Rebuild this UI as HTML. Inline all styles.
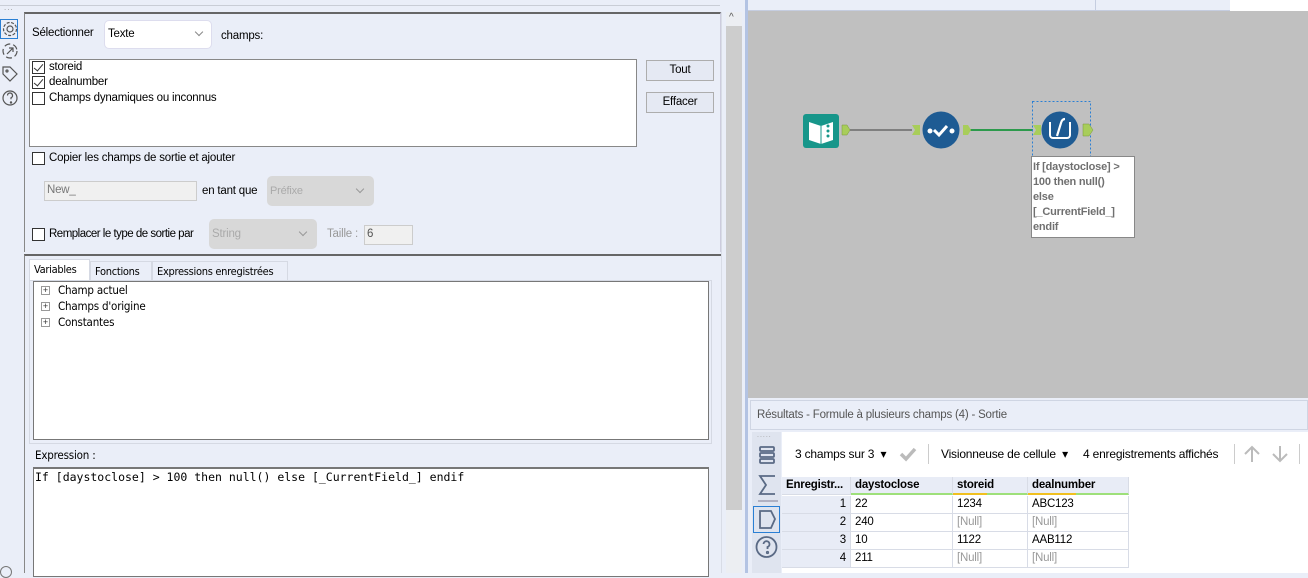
<!DOCTYPE html>
<html><head><meta charset="utf-8"><style>
*{margin:0;padding:0;box-sizing:border-box}
body{width:1308px;height:573px;overflow:hidden;position:relative;background:#eaeef8;font-family:"Liberation Sans",sans-serif;font-size:11.5px;letter-spacing:-0.2px;color:#000}
.a{position:absolute}
.t{position:absolute;white-space:nowrap}
.cb{position:absolute;width:13px;height:13px;border:1px solid #333;background:#fff}
.cb.c::after{content:"";position:absolute;left:3px;top:0px;width:4px;height:8px;border:solid #333;border-width:0 1.5px 1.5px 0;transform:rotate(40deg)}
.btn{position:absolute;border:1px solid #adadad;background:#e5e9f3;text-align:center;line-height:19px}
.dd{position:absolute;border-radius:5px}
.chev{position:absolute;width:6px;height:6px;border:solid #888;border-width:0 1px 1px 0;transform:rotate(45deg)}
.tab{position:absolute;top:261px;height:20px;border:1px solid #d5d9e3;border-bottom:none;font-family:"DejaVu Sans Condensed","DejaVu Sans",sans-serif;font-size:11px;letter-spacing:-0.3px;line-height:19px;padding:0 4px;white-space:nowrap;overflow:hidden}
.tree{font-family:"DejaVu Sans Condensed","DejaVu Sans",sans-serif;font-size:11.5px;letter-spacing:-0.2px}
.pl{position:absolute;width:9px;height:9px;border:1px solid #999;background:#fff;font-size:9px;line-height:7px;text-align:center;color:#333;letter-spacing:0}
.cell{position:absolute;height:18px;border-right:1px solid #d8dce6;border-bottom:1px solid #d8dce6;line-height:17px;padding:0 4px;font-size:11.5px}
</style></head><body>
<div class="a" style="left:0;top:5px;width:720px;height:1px;background:#c9cdd6"></div>
<div class="t" style="left:4px;top:3px;color:#999;font-size:8px;letter-spacing:1px">...</div>
<div class="a" style="left:0;top:19px;width:18px;height:20px;border:1px solid #2a7fd4"></div>
<svg class="a" style="left:1px;top:20px" width="18" height="90" viewBox="0 0 18 90" fill="none" stroke="#555" stroke-width="1.2">
<circle cx="9" cy="9" r="3"/><circle cx="9" cy="9" r="6.5" stroke-dasharray="3 1.5"/>
<circle cx="9" cy="31" r="7" stroke-dasharray="6 3"/><path d="M6 34l6-6M8 28h4v4"/>
<path d="M2 47l7 0 7 7-7 7-7-7z"/><circle cx="6" cy="51" r="1"/>
<circle cx="9" cy="78" r="7"/><path d="M6.5 75.5a2.5 2.5 0 1 1 3.5 2.3v1.5"/><circle cx="10" cy="82.5" r=".6"/>
</svg>
<div class="a" style="left:24px;top:12px;width:697px;height:240px;border-left:1px solid #888;border-top:2px solid #666;border-right:1px solid #ccd"></div>
<div class="t" style="left:32px;top:27px">Sélectionner</div>
<div class="dd" style="left:104px;top:20px;width:108px;height:29px;background:#fff;border:1px solid #dde"></div>
<div class="t" style="left:108px;top:28px">Texte</div>
<div class="chev" style="left:196px;top:29px"></div>
<div class="t" style="left:221px;top:30px">champs:</div>
<div class="a" style="left:29px;top:59px;width:608px;height:88px;background:#fff;border:1px solid #888"></div>
<div class="cb c" style="left:32px;top:61px"></div><div class="t" style="left:49px;top:61px">storeid</div>
<div class="cb c" style="left:32px;top:76px"></div><div class="t" style="left:49px;top:76px">dealnumber</div>
<div class="cb" style="left:32px;top:92px"></div><div class="t" style="left:49px;top:92px">Champs dynamiques ou inconnus</div>
<div class="btn" style="left:646px;top:60px;width:68px;height:21px">Tout</div>
<div class="btn" style="left:646px;top:92px;width:68px;height:21px">Effacer</div>
<div class="cb" style="left:32px;top:152px"></div><div class="t" style="left:49px;top:152px">Copier les champs de sortie et ajouter</div>
<div class="a" style="left:44px;top:181px;width:153px;height:20px;background:#f0f0f0;border:1px solid #ccc"></div>
<div class="t" style="left:47px;top:184px;color:#777">New_</div>
<div class="t" style="left:202px;top:185px">en tant que</div>
<div class="dd" style="left:267px;top:176px;width:107px;height:30px;background:#d8d8d8"></div>
<div class="t" style="left:270px;top:185px;color:#aaa;font-size:11px">Préfixe</div>
<div class="chev" style="left:357px;top:186px;border-color:#999"></div>
<div class="cb" style="left:32px;top:228px"></div><div class="t" style="left:49px;top:228px;letter-spacing:-0.5px">Remplacer le type de sortie par</div>
<div class="dd" style="left:209px;top:219px;width:108px;height:30px;background:#d8d8d8"></div>
<div class="t" style="left:212px;top:228px;color:#aaa">String</div>
<div class="chev" style="left:300px;top:229px;border-color:#999"></div>
<div class="t" style="left:327px;top:228px;color:#999">Taille :</div>
<div class="a" style="left:364px;top:225px;width:49px;height:20px;background:#f0f0f0;border:1px solid #ccc"></div>
<div class="t" style="left:367px;top:228px;color:#555">6</div>
<div class="a" style="left:24px;top:254px;width:697px;height:319px;border-left:1px solid #888;border-top:2px solid #666"></div>
<div class="tab" style="left:29px;width:61px;background:#fff;top:259px;height:22px">Variables</div>
<div class="tab" style="left:90px;width:62px">Fonctions</div>
<div class="tab" style="left:152px;width:136px">Expressions enregistrées</div>
<div class="a" style="left:29px;top:280px;width:683px;height:164px;border:1px solid #d5d9e3"></div>
<div class="a tree" style="left:33px;top:281px;width:676px;height:159px;background:#fff;border:1px solid #777"></div>
<div class="pl" style="left:41px;top:286px">+</div><div class="t tree" style="left:58px;top:283px">Champ actuel</div>
<div class="pl" style="left:41px;top:302px">+</div><div class="t tree" style="left:58px;top:299px">Champs d'origine</div>
<div class="pl" style="left:41px;top:318px">+</div><div class="t tree" style="left:58px;top:315px">Constantes</div>
<div class="t tree" style="left:35px;top:448px">Expression :</div>
<div class="a" style="left:33px;top:467px;width:676px;height:110px;background:#fff;border:1px solid #777;border-top:2px solid #777"></div>
<div class="t" style="left:35px;top:470px;font-family:'DejaVu Sans Mono','Liberation Mono',monospace;font-size:11.5px;letter-spacing:0">If [daystoclose] &gt; 100 then null() else [_CurrentField_] endif</div>
<div class="a" style="left:0;top:566px;width:12px;height:12px;border:1px solid #777;border-radius:50%"></div>
<div class="a" style="left:721px;top:12px;width:24px;height:561px;background:#eaeef8;border-left:1px solid #d8dce6"></div>
<div class="a" style="left:726px;top:12px;width:16px;height:561px;background:#eceef2"></div>
<div class="t" style="left:729px;top:12px;font-size:10px;color:#555">&#94;</div>
<div class="a" style="left:726px;top:26px;width:16px;height:484px;background:#cdcdcd"></div>
<div class="a" style="left:745px;top:0;width:3px;height:573px;background:#b3c3e3"></div>
<div class="a" style="left:748px;top:0;width:560px;height:11px;background:#eaeef8;border-bottom:1px solid #c5cde0"></div>
<div class="a" style="left:1095px;top:0;width:1px;height:11px;background:#c5cde0"></div>
<div class="a" style="left:1230px;top:0;width:78px;height:11px;background:#fff"></div>
<div class="a" style="left:748px;top:11px;width:560px;height:384px;background:#c0c0c0"></div>
<svg class="a" style="left:748px;top:11px" width="560" height="384" viewBox="748 11 560 384">
<line x1="850" y1="130" x2="912" y2="130" stroke="#7f7f7f" stroke-width="2"/>
<line x1="970" y1="130" x2="1033" y2="130" stroke="#2c9a4c" stroke-width="2"/>
<rect x="803" y="114" width="36" height="34" rx="3" fill="#17968a"/>
<path d="M809 122v18l12 4 12-4v-18l-12 4z" fill="#fff"/><path d="M821 126v18" stroke="#17968a"/>
<circle cx="828" cy="126" r="1.5" fill="#17968a"/><circle cx="828" cy="131" r="1.5" fill="#17968a"/><circle cx="828" cy="136" r="1.5" fill="#17968a"/>
<path d="M842 125h5l3 5-3 5h-5z" fill="#a8cd5a" stroke="#7a9a3a" stroke-width=".5"/>
<path d="M912 125h8v10h-8l3-5z" fill="#a8cd5a"/>
<circle cx="941" cy="130" r="18.5" fill="#1e5b93"/>
<circle cx="930" cy="131" r="2.5" fill="#fff"/><circle cx="952" cy="131" r="2.5" fill="#fff"/>
<path d="M934 130l5 5 8-9" stroke="#fff" stroke-width="3" fill="none"/>
<path d="M963 125h5l3 5-3 5h-5z" fill="#a8cd5a"/>
<rect x="1032.5" y="101.5" width="58" height="55" fill="none" stroke="#2a7fd4" stroke-dasharray="2 2"/>
<path d="M1033 125h8v10h-8l3-5z" fill="#a8cd5a"/>
<circle cx="1060" cy="130" r="18.5" fill="#1e5b93"/>
<path d="M1050 122v13a3 3 0 0 0 3 3h14a3 3 0 0 0 3-3v-13" stroke="#fff" stroke-width="2" fill="none"/>
<path d="M1057 136l4-13q1-4 4-4" stroke="#fff" stroke-width="2.2" fill="none"/>
<path d="M1083 124h6l4 6-4 6h-6z" fill="#a8cd5a" stroke="#7a9a3a" stroke-width=".5"/>
<rect x="1031.5" y="156.5" width="103" height="81" fill="#fff" stroke="#888"/>
<g font-family="Liberation Sans" font-size="11" font-weight="bold" fill="#707070">
<text x="1033" y="170">If [daystoclose] &gt;</text><text x="1033" y="185">100 then null()</text><text x="1033" y="200">else</text><text x="1033" y="215">[_CurrentField_]</text><text x="1033" y="230">endif</text></g>
</svg>
<div class="a" style="left:748px;top:395px;width:560px;height:3px;background:#c0c0c0"></div>
<div class="a" style="left:750px;top:400px;width:558px;height:30px;background:#eaeef8;border:1px solid #cfd5e3"></div>
<div class="t" style="left:757px;top:409px;color:#555;font-size:11.5px">Résultats - Formule à plusieurs champs (4) - Sortie</div>
<div class="a" style="left:752px;top:432px;width:29px;height:141px;background:#dfe4ef"></div>
<div class="t" style="left:757px;top:432px;color:#999;font-size:7px;letter-spacing:1px">.....</div>
<svg class="a" style="left:752px;top:440px" width="30" height="130" viewBox="0 0 30 130" fill="none" stroke="#5a6a85" stroke-width="1.8">
<rect x="8" y="7" width="14" height="4" rx="1"/><rect x="8" y="13" width="14" height="4" rx="1"/><rect x="8" y="19" width="14" height="4" rx="1"/>
<path d="M23 36H8l6 9-6 9h15"/><path d="M6 61h20" stroke="#aab"/>
<rect x="1.5" y="66.5" width="26" height="26" stroke="#2a7fd4" stroke-width="1"/>
<path d="M8 71h11l4 8-4 9H8z"/>
<circle cx="14.5" cy="107" r="10"/><path d="M11.5 104a3 3 0 1 1 4 3v2"/><circle cx="15.5" cy="112.5" r=".7"/>
</svg>
<div class="a" style="left:782px;top:432px;width:526px;height:44px;background:#fff"></div>
<div class="t" style="left:795px;top:447px;font-size:12px">3 champs sur 3 &nbsp;▾</div>
<svg class="a" style="left:899px;top:446px" width="18" height="16" viewBox="0 0 18 16"><path d="M2 8l5 5 9-10" stroke="#bbb" stroke-width="3.5" fill="none"/></svg>
<div class="a" style="left:928px;top:444px;width:1px;height:20px;background:#ccc"></div>
<div class="t" style="left:941px;top:447px;font-size:12px">Visionneuse de cellule &nbsp;▾</div>
<div class="t" style="left:1083px;top:447px;font-size:12px">4 enregistrements affichés</div>
<div class="a" style="left:1234px;top:444px;width:1px;height:20px;background:#ccc"></div>
<svg class="a" style="left:1242px;top:444px" width="50" height="20" viewBox="0 0 50 20" stroke="#bbb" stroke-width="2" fill="none"><path d="M10 18V3M3 10l7-7 7 7M38 2v15M31 10l7 7 7-7"/></svg>
<div class="a" style="left:1299px;top:444px;width:1px;height:20px;background:#ccc"></div>
<div class="a" style="left:782px;top:476px;width:526px;height:97px;background:#fff"></div>
<div class="cell" style="left:782px;top:477px;width:69px;background:#e8ecf6;font-weight:bold">Enregistr...</div>
<div class="cell" style="left:851px;top:477px;width:102px;background:#e8ecf6;font-weight:bold;border-bottom:2px solid #9ee07a">daystoclose</div>
<div class="cell" style="left:953px;top:477px;width:75px;background:#e8ecf6;font-weight:bold;border-bottom:2px solid #9ee07a"><span style="position:absolute;left:0;bottom:-2px;width:34px;height:2px;background:#f0c020"></span>storeid</div>
<div class="cell" style="left:1028px;top:477px;width:101px;background:#e8ecf6;font-weight:bold;border-bottom:2px solid #9ee07a"><span style="position:absolute;left:0;bottom:-2px;width:48px;height:2px;background:#f0c020"></span>dealnumber</div>
<div class="cell" style="left:782px;top:496px;width:69px;background:#e8ecf6;text-align:right">1</div><div class="cell" style="left:851px;top:496px;width:102px">22</div><div class="cell" style="left:953px;top:496px;width:75px">1234</div><div class="cell" style="left:1028px;top:496px;width:101px">ABC123</div>
<div class="cell" style="left:782px;top:514px;width:69px;background:#e8ecf6;text-align:right">2</div><div class="cell" style="left:851px;top:514px;width:102px">240</div><div class="cell" style="left:953px;top:514px;width:75px;color:#999">[Null]</div><div class="cell" style="left:1028px;top:514px;width:101px;color:#999">[Null]</div>
<div class="cell" style="left:782px;top:532px;width:69px;background:#e8ecf6;text-align:right">3</div><div class="cell" style="left:851px;top:532px;width:102px">10</div><div class="cell" style="left:953px;top:532px;width:75px">1122</div><div class="cell" style="left:1028px;top:532px;width:101px">AAB112</div>
<div class="cell" style="left:782px;top:550px;width:69px;background:#e8ecf6;text-align:right">4</div><div class="cell" style="left:851px;top:550px;width:102px">211</div><div class="cell" style="left:953px;top:550px;width:75px;color:#999">[Null]</div><div class="cell" style="left:1028px;top:550px;width:101px;color:#999">[Null]</div>
</body></html>
